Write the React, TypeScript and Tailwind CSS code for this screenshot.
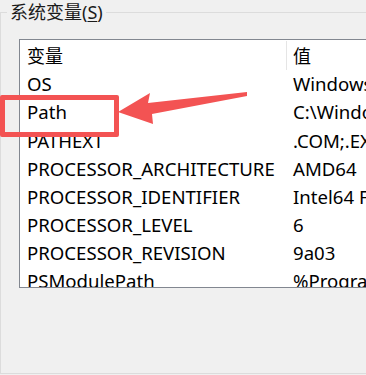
import React from "react";

const rows: [string, string][] = [
  ["OS", "Windows_NT"],
  ["Path", "C:\\Windows\\system32"],
  ["PATHEXT", ".COM;.EXE;.BAT"],
  ["PROCESSOR_ARCHITECTURE", "AMD64"],
  ["PROCESSOR_IDENTIFIER", "Intel64 Family 6"],
  ["PROCESSOR_LEVEL", "6"],
  ["PROCESSOR_REVISION", "9a03"],
  ["PSModulePath", "%ProgramFiles%"],
];

const font = {
  fontFamily: '"Noto Sans", "Noto Sans CJK SC", sans-serif',
};

export default function App() {
  return (
    <div
      className="relative w-[366px] h-[375px] overflow-hidden bg-[#f0f0f0] text-black"
      style={font}
    >
      <fieldset className="w-[420px] h-[374px] border border-[#dcdcdc] m-0 p-0">
        <legend className="ml-[6px] px-[3px] text-[18px] leading-[24px] text-[#1a1a1a]">
          系统变量(<span className="underline underline-offset-2">S</span>)
        </legend>
        <div className="ml-[18px] mt-[15px] w-[400px] h-[249px] border border-[#828790] bg-white overflow-hidden text-[18.6px]">
          <div className="flex h-[30px] items-center whitespace-nowrap">
            <div className="w-[266px] shrink-0 pl-[7px] pt-[2px] text-[18px]">变量</div>
            <div className="w-px h-[29px] shrink-0 bg-[#e5e5e5] self-start mt-px" />
            <div className="pl-[6px] pt-[2px] text-[18px]">值</div>
          </div>
          {rows.map(([k, v]) => (
            <div key={k} className="flex h-[28.2px] items-center whitespace-nowrap">
              <div className="w-[267px] shrink-0 pl-[7px]">{k}</div>
              <div className="pl-[6px] shrink-0">{v}</div>
            </div>
          ))}
        </div>
      </fieldset>

      <div className="absolute left-0 top-[95px] w-[119px] h-[42px] border-[5px] border-[#f35353] rounded-[2px]" />
      <svg
        className="absolute left-0 top-0"
        width="366"
        height="375"
        viewBox="0 0 366 375"
      >
        <polygon
          points="118,112 150,93 148,103 247,92 247,96 152,114 153,124"
          fill="#f35353"
        />
      </svg>
    </div>
  );
}
